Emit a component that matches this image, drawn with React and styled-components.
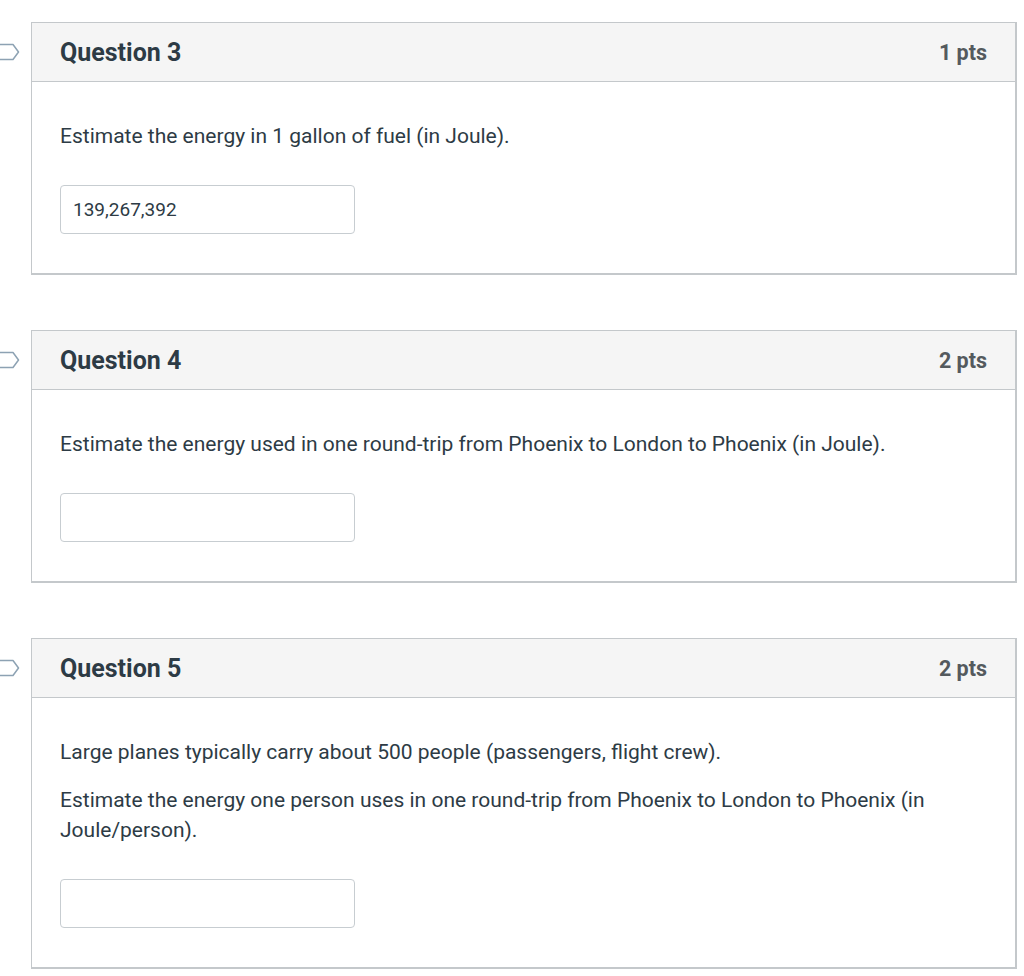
import React from 'react'
import styled, { createGlobalStyle } from 'styled-components'

const GlobalStyle = createGlobalStyle`
  body {
    margin: 0;
    background: #fff;
    font-family: Roboto, "Liberation Sans", Arial, sans-serif;
    color: #2d3b45;
  }
`

const Page = styled.main`
  display: flex;
  flex-direction: column;
  gap: 55px;
  padding: 22px 7px 6px 0;
`

const Row = styled.section`
  display: flex;
  align-items: flex-start;
`

const FlagCell = styled.div`
  width: 31px;
  height: 59px;
  flex: none;
  display: flex;
  align-items: center;
`

const Card = styled.div`
  flex: 1;
  border: 1px solid #c4c8cb;
  border-width: 1px 2px 2px 1px;
  background: #fff;
`

const Header = styled.header`
  display: flex;
  justify-content: space-between;
  align-items: center;
  height: 58px;
  padding: 0 28px;
  background: #f5f5f5;
  border-bottom: 1px solid #c4c8cb;
`

const Title = styled.h2`
  margin: 0;
  font-size: 25px;
  font-weight: 700;
  color: #2d3b45;
`

const Points = styled.span`
  font-size: 21.5px;
  font-weight: 700;
  color: #545a5e;
`

const Body = styled.div`
  padding: 39px 28px 39px;
`

const Text = styled.p`
  margin: 0 0 18px;
  font-size: 21px;
  line-height: 30px;
  color: #2d3b45;

  &:last-of-type {
    margin-bottom: 0;
  }
`

const Answer = styled.input`
  display: block;
  box-sizing: border-box;
  margin-top: 34px;
  width: 295px;
  height: 49px;
  padding: 0 12px;
  border: 1px solid #c7cdd1;
  border-radius: 4px;
  font-family: inherit;
  font-size: 19px;
  color: #2d3b45;
  background: #fff;
  outline: none;
`

const Flag = () => (
  <svg width="20" height="18" viewBox="0 0 20 18" fill="none">
    <path
      d="M-2 1.5 H13 L18.5 9 L13 16.5 H-2"
      stroke="#8da2b3"
      strokeWidth="1.5"
      strokeLinejoin="round"
    />
  </svg>
)

const questions = [
  {
    n: 3,
    pts: 1,
    text: ['Estimate the energy in 1 gallon of fuel (in Joule).'],
    value: '139,267,392',
  },
  {
    n: 4,
    pts: 2,
    text: [
      'Estimate the energy used in one round-trip from Phoenix to London to Phoenix (in Joule).',
    ],
    value: '',
  },
  {
    n: 5,
    pts: 2,
    text: [
      'Large planes typically carry about 500 people (passengers, flight crew).',
      'Estimate the energy one person uses in one round-trip from Phoenix to London to Phoenix (in Joule/person).',
    ],
    value: '',
  },
]

function Question({ q }) {
  return (
    <Row>
      <FlagCell>
        <Flag />
      </FlagCell>
      <Card>
        <Header>
          <Title>Question {q.n}</Title>
          <Points>{q.pts} pts</Points>
        </Header>
        <Body>
          {q.text.map((t, i) => (
            <Text key={i}>{t}</Text>
          ))}
          <Answer type="text" defaultValue={q.value} />
        </Body>
      </Card>
    </Row>
  )
}

export default function App() {
  return (
    <>
      <GlobalStyle />
      <Page>
        {questions.map((q) => (
          <Question key={q.n} q={q} />
        ))}
      </Page>
    </>
  )
}
